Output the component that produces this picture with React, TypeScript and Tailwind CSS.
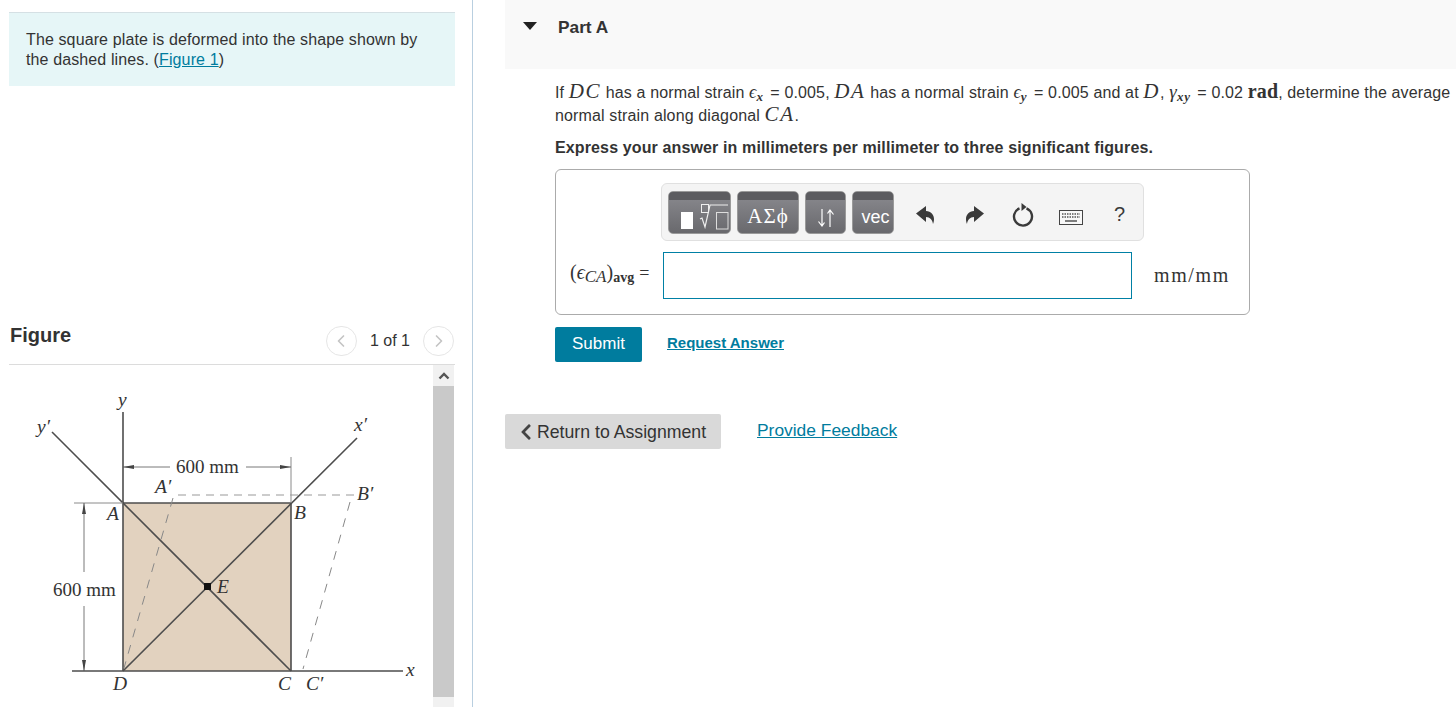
import { FaChevronLeft } from "react-icons/fa";
import { ChevronLeft, ChevronRight } from "lucide-react";

function V({ children }: { children: React.ReactNode }) {
  return <span className="font-['Liberation_Serif',serif] italic text-[21px] leading-[1] tracking-[1.6px] text-[#333]">{children}</span>;
}

function Sub({ children }: { children: React.ReactNode }) {
  return <span className="font-['Liberation_Serif',serif] italic font-bold text-[13px] leading-[0] align-[-3px] tracking-[0.8px] pr-[2px]">{children}</span>;
}

function Eps() {
  return <span className="font-['Liberation_Serif',serif] italic text-[18px] leading-[1]">ϵ</span>;
}

function Figure() {
  const label = "font-['Liberation_Serif',serif] italic";
  return (
    <svg width="424" height="342" viewBox="9 365 424 342" className="block">
      <rect x="123" y="503" width="168" height="168" fill="#e2d2bf" />
      <g stroke="#4d4d4d" strokeWidth="1.6" fill="none">
        <path d="M123 412V671" />
        <path d="M72 671H403" />
        <path d="M52 432L291 671" />
        <path d="M123 671L357 438" />
        <path d="M123 503H291V671" />
      </g>
      <g stroke="#8a8a8a" strokeWidth="1" fill="none">
        <path d="M291 457V503" />
        <path d="M74 503H123" />
      </g>
      <g stroke="#555" strokeWidth="0.8" fill="none">
        <path d="M123 467H170M246 467H291" />
        <path d="M84 503V572M84 606V671" />
      </g>
      <g fill="#444">
        <path d="M123 467l11-2v4z" />
        <path d="M291 467l-11-2v4z" />
        <path d="M84 503l-2 11h4z" />
        <path d="M84 671l-2-11h4z" />
      </g>
      <g stroke="#999" strokeWidth="1" fill="none" strokeDasharray="8 6">
        <path d="M178 495H354" />
      </g>
      <g stroke="#888" strokeWidth="1" fill="none" strokeDasharray="9 8">
        <path d="M173 498L124 668" />
        <path d="M350 502L303 669" />
      </g>
      <rect x="204" y="583" width="7" height="7" fill="#111" />
      <g className={label} fontSize="19.5" fill="#333">
        <text x="118" y="406">y</text>
        <text x="37" y="433">y′</text>
        <text x="354" y="431">x′</text>
        <text x="406" y="676">x</text>
        <text x="155" y="493">A′</text>
        <text x="357" y="500">B′</text>
        <text x="107" y="520">A</text>
        <text x="294" y="519">B</text>
        <text x="217" y="593">E</text>
        <text x="113" y="690">D</text>
        <text x="278" y="690">C</text>
        <text x="306" y="690">C′</text>
      </g>
      <g className="font-['Liberation_Serif',serif]" fontSize="19" fill="#333">
        <text x="176" y="473">600 mm</text>
        <text x="53" y="596">600 mm</text>
      </g>
    </svg>
  );
}

function ToolBtn({ w, children }: { w: string; children: React.ReactNode }) {
  return (
    <div className={`${w} h-[43px] rounded-[5px] border border-[#9a9a9a] overflow-hidden flex flex-col bg-gradient-to-b from-[#8b8b90] to-[#69696d]`}>
      <div className="h-[8px] bg-[#5c5c60] shrink-0" />
      <div className="flex-1 flex items-center justify-center text-white">{children}</div>
    </div>
  );
}

export default function App() {
  return (
    <div className="flex h-[707px] w-[1456px] overflow-hidden bg-white font-['Liberation_Sans',sans-serif] text-[#333]">
      {/* Left column */}
      <div className="w-[473px] shrink-0 h-full border-r border-[#b9cfe0] pl-[9px] pr-[17px] pt-[12px] flex flex-col">
        <div className="h-[74px] bg-[#e6f6f7] border-t border-[#d5e0e4] pl-[17px] pt-[17px] text-[16px] leading-[20px] tracking-[0.12px]">
          <p className="w-[400px]">
            The square plate is deformed into the shape shown by the dashed lines. (
            <a className="text-[#007c9e] underline">Figure 1</a>)
          </p>
        </div>

        <div className="mt-[229px] h-[50px] flex items-center justify-between border-b border-[#dcdcdc] pb-[1px] pr-[1px]">
          <span className="pl-[1px] mb-[8px] text-[20px] font-bold">Figure</span>
          <div className="flex items-center mt-[3px]">
            <span className="w-[31px] h-[30px] rounded-full border border-[#e6e6e6] flex items-center justify-center text-[#c4c4c4]">
              <ChevronLeft size={20} strokeWidth={2} />
            </span>
            <span className="mx-[13px] text-[16px]">1 of 1</span>
            <span className="w-[31px] h-[30px] rounded-full border border-[#e6e6e6] flex items-center justify-center text-[#c4c4c4]">
              <ChevronRight size={20} strokeWidth={2} />
            </span>
          </div>
        </div>

        <div className="flex flex-1">
          <Figure />
          <div className="w-[21px] flex flex-col bg-[#f1f1f1]">
            <div className="h-[21px] flex items-center justify-center">
              <svg width="12" height="8" viewBox="0 0 12 8">
                <path d="M1.5 6.5L6 2l4.5 4.5" stroke="#555" strokeWidth="2.4" fill="none" />
              </svg>
            </div>
            <div className="h-[311px] bg-[#c9c9c9]" />
          </div>
        </div>
      </div>

      {/* Right column */}
      <div className="ml-[32px] flex-1 min-w-0">
        <div className="h-[69px] bg-[#f9f9f9] pl-[18px] pt-[17px] flex items-start">
          <svg width="14" height="8" viewBox="0 0 14 8" className="mt-[5px]">
            <path d="M0 0h14L7 8z" fill="#222" />
          </svg>
          <span className="ml-[21px] text-[17.3px] leading-[20px] font-bold">Part A</span>
        </div>

        <div className="pl-[50px]">
          <p className="mt-[11px] w-[905px] text-[16px] leading-[23px] tracking-[0.14px] whitespace-nowrap">
            If <V>DC</V> has a normal strain <Eps /><Sub>x</Sub> = 0.005, <V>DA</V> has a normal strain <Eps /><Sub>y</Sub> = 0.005 and at <V>D</V>, <span className="font-['Liberation_Serif',serif] italic text-[19px]">γ</span><Sub>xy</Sub> = 0.02 <span className="font-['Liberation_Serif',serif] text-[20px] font-bold">rad</span>, determine the average
            <br />
            normal strain along diagonal <V>CA</V>.
          </p>
          <p className="mt-[11px] text-[16px] leading-[20px] font-bold tracking-[0.13px]">Express your answer in millimeters per millimeter to three significant figures.</p>

          <div className="mt-[11px] w-[695px] h-[146px] rounded-[6px] border border-[#ababab] pt-[13px]">
            <div className="ml-[105px] w-[483px] h-[58px] rounded-[6px] border border-[#e0e0e0] bg-[#f4f4f4] flex items-center pl-[6px]">
              <div className="flex gap-[6px]">
                <ToolBtn w="w-[63px]">
                  <svg width="61" height="33" viewBox="0 0 61 33">
                    <rect x="12" y="12" width="12" height="17" fill="#fff" />
                    <rect x="32.5" y="4.5" width="7" height="8" fill="none" stroke="#eee" />
                    <path d="M31 19l2-1 3 9 5-22h18" fill="none" stroke="#eee" strokeWidth="1.2" />
                    <rect x="47.5" y="12.5" width="11.5" height="16.5" fill="none" stroke="#ddd" />
                  </svg>
                </ToolBtn>
                <ToolBtn w="w-[62px]">
                  <span className="font-['Liberation_Serif',serif] text-[21px] leading-none tracking-[1px] pt-[1px]">ΑΣϕ</span>
                </ToolBtn>
                <ToolBtn w="w-[41px]">
                  <svg width="18" height="20" viewBox="0 0 18 20" className="mt-[3px]">
                    <path d="M5 1v17M1.5 13.5L5 18l2.5-3.5M13 19V2M16.5 6.5L13 2l-2.5 3.5" fill="none" stroke="#fff" strokeWidth="1.2" />
                  </svg>
                </ToolBtn>
                <ToolBtn w="w-[42px]">
                  <span className="text-[18px] leading-none pl-[5px] pt-[1px]">vec</span>
                </ToolBtn>
              </div>
              <div className="flex items-center ml-[22px] mt-[6px] text-[#3a3a3a]">
                <svg width="18" height="20" viewBox="0 0 18 20">
                  <path d="M0 8.5L10 1v5c5 0 8 4 8 8 0 2-.5 4-1 5-.5-4-3-7-7-7v5z" fill="#3a3a3a" />
                </svg>
                <svg width="18" height="20" viewBox="0 0 18 20" className="ml-[32px]">
                  <path d="M18 8.5L8 1v5c-5 0-8 4-8 8 0 2 .5 4 1 5 .5-4 3-7 7-7v5z" fill="#3a3a3a" />
                </svg>
                <svg width="22" height="24" viewBox="0 0 22 24" className="ml-[28px]">
                  <path d="M7.5 5.3A9 9 0 1 0 14.5 5.3" fill="none" stroke="#3a3a3a" strokeWidth="2.4" />
                  <path d="M9.5 0v8l5-4z" fill="#3a3a3a" />
                </svg>
                <svg width="24" height="15" viewBox="0 0 24 15" className="ml-[25px] mt-[4px]">
                  <rect x="0.5" y="0.5" width="23" height="14" fill="#f8f8f8" stroke="#444" />
                  <path d="M3 4h18M3 7h18" stroke="#555" strokeWidth="1.5" strokeDasharray="1.5 1" />
                  <path d="M6 11h12" stroke="#555" strokeWidth="1.5" />
                </svg>
                <span className="ml-[31px] text-[20px] leading-none -mt-[2px]">?</span>
              </div>
            </div>

            <div className="mt-[11px] flex items-center">
              <span className="w-[107px] shrink-0 pl-[14px] pb-[4px] font-['Liberation_Serif',serif] text-[20px] whitespace-nowrap">
                (<span className="italic">ϵ<span className="text-[17px] align-[-3px]">CA</span></span>)<span className="text-[14px] font-bold align-[-3px]">avg</span> <span className="text-[18px]">=</span>
              </span>
              <div className="w-[469px] h-[47px] border border-solid border-[#0080a5] bg-white" />
              <span className="ml-[22px] pb-[2px] font-['Liberation_Serif',serif] text-[20px] tracking-[1.6px]">mm/mm</span>
            </div>
          </div>

          <div className="mt-[12px] flex items-center">
            <button className="w-[87px] h-[35px] rounded-[2px] bg-[#007c9e] text-white text-[17px] pb-[2px]">Submit</button>
            <a className="ml-[25px] -mt-[3px] text-[15px] font-bold text-[#007c9e] underline">Request Answer</a>
          </div>
        </div>

        <div className="mt-[52px] flex items-start">
          <button className="w-[216px] h-[35px] rounded-[2px] bg-[#d9d9d9] flex items-center pl-[12px] text-[17.7px]">
            <FaChevronLeft size={18} className="text-[#444]" />
            <span className="ml-[2px] mt-[1px]">Return to Assignment</span>
          </button>
          <a className="ml-[36px] mt-[5px] text-[17.4px] leading-[22px] text-[#007c9e] underline">Provide Feedback</a>
        </div>
      </div>
    </div>
  );
}
